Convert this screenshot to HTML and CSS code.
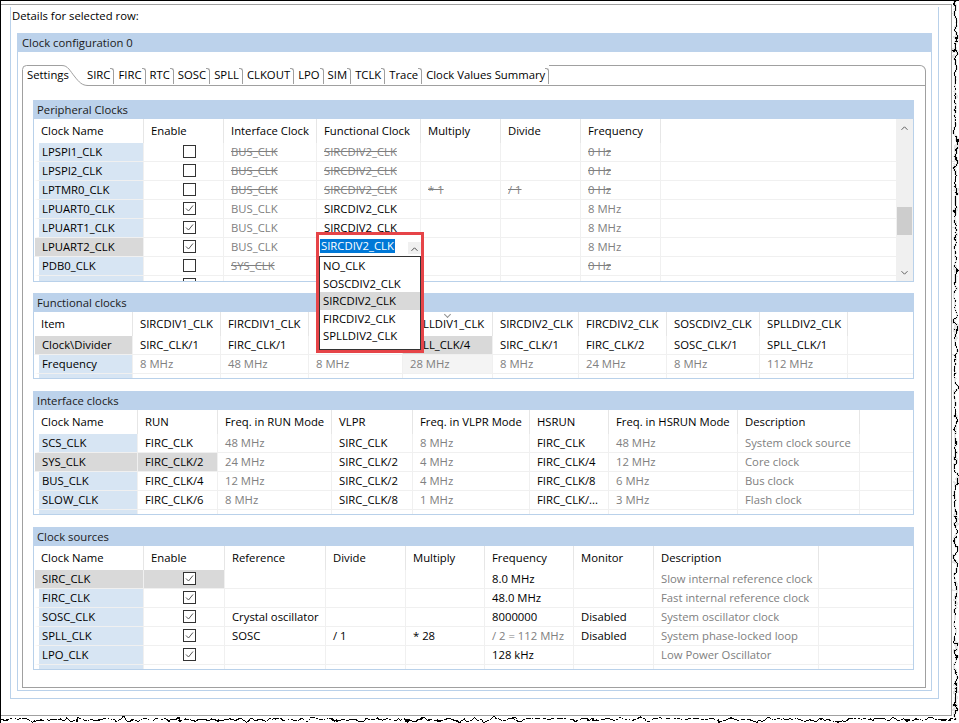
FILE: index.html
```html
<!DOCTYPE html>
<html>
<head>
<meta charset="utf-8">
<title>Details for selected row</title>
<link rel="stylesheet" href="styles.css">
</head>
<body>
<div class="shot">
  <div class="outer">
    <div class="details">
      <div class="label">Details for selected row:</div>
      <div class="cfg">
        <div class="cfg-head">Clock configuration 0</div>
        <div class="cfg-body">
          <div class="tabstrip">
            <div class="tab-sel">
              <svg class="tabshape" width="66" height="21" viewBox="0 0 66 21"><path d="M0.5 21 V4.5 Q0.5 0.5 4.5 0.5 H40 C46 0.5 48 6 53 12 C57 17 60 20.5 66 20.5" fill="#fff" stroke="#a0a0a0"/></svg>
              <span class="tab-sel-text">Settings</span>
            </div>
            <div class="tab first">SIRC</div>
            <div class="tab">FIRC</div>
            <div class="tab">RTC</div>
            <div class="tab">SOSC</div>
            <div class="tab">SPLL</div>
            <div class="tab">CLKOUT</div>
            <div class="tab">LPO</div>
            <div class="tab">SIM</div>
            <div class="tab">TCLK</div>
            <div class="tab">Trace</div>
            <div class="tab">Clock Values Summary</div>
            <div class="tabfill"></div>
          </div>
          <div class="tabbody">

            <div class="sec sec-per">
              <div class="sec-head">Peripheral Clocks</div>
              <div class="sec-body h-per">
                <table class="grid per">
                  <colgroup><col class="w110"><col class="w80"><col class="w93"><col class="w104"><col class="w80"><col class="w80"><col class="w80"><col class="w235"></colgroup>
                  <tr><th>Clock Name</th><th>Enable</th><th>Interface Clock</th><th>Functional Clock</th><th>Multiply</th><th>Divide</th><th>Frequency</th><th></th></tr>
                  <tr><td class="n">LPSPI1_CLK</td><td class="ck"><svg class="cb" width="13" height="13" viewBox="0 0 13 13"><rect x="0.5" y="0.5" width="12" height="12" fill="#fff" stroke="#333"/></svg></td><td class="s">BUS_CLK</td><td class="s">SIRCDIV2_CLK</td><td></td><td></td><td class="s">0 Hz</td><td></td></tr>
                  <tr><td class="n">LPSPI2_CLK</td><td class="ck"><svg class="cb" width="13" height="13" viewBox="0 0 13 13"><rect x="0.5" y="0.5" width="12" height="12" fill="#fff" stroke="#333"/></svg></td><td class="s">BUS_CLK</td><td class="s">SIRCDIV2_CLK</td><td></td><td></td><td class="s">0 Hz</td><td></td></tr>
                  <tr><td class="n">LPTMR0_CLK</td><td class="ck"><svg class="cb" width="13" height="13" viewBox="0 0 13 13"><rect x="0.5" y="0.5" width="12" height="12" fill="#fff" stroke="#333"/></svg></td><td class="s">BUS_CLK</td><td class="s">SIRCDIV2_CLK</td><td class="s">* 1</td><td class="s">/ 1</td><td class="s">0 Hz</td><td></td></tr>
                  <tr><td class="n">LPUART0_CLK</td><td class="ck"><svg class="cb" width="13" height="13" viewBox="0 0 13 13"><rect x="0.5" y="0.5" width="12" height="12" fill="#fff" stroke="#333"/><path d="M3 6.5 L5.5 9 L10 3.5" fill="none" stroke="#555"/></svg></td><td class="g">BUS_CLK</td><td>SIRCDIV2_CLK</td><td></td><td></td><td class="g">8 MHz</td><td></td></tr>
                  <tr><td class="n">LPUART1_CLK</td><td class="ck"><svg class="cb" width="13" height="13" viewBox="0 0 13 13"><rect x="0.5" y="0.5" width="12" height="12" fill="#fff" stroke="#333"/><path d="M3 6.5 L5.5 9 L10 3.5" fill="none" stroke="#555"/></svg></td><td class="g">BUS_CLK</td><td>SIRCDIV2_CLK</td><td></td><td></td><td class="g">8 MHz</td><td></td></tr>
                  <tr><td class="sel">LPUART2_CLK</td><td class="ck"><svg class="cb" width="13" height="13" viewBox="0 0 13 13"><rect x="0.5" y="0.5" width="12" height="12" fill="#fff" stroke="#333"/><path d="M3 6.5 L5.5 9 L10 3.5" fill="none" stroke="#555"/></svg></td><td class="g">BUS_CLK</td><td>SIRCDIV2_CLK</td><td></td><td></td><td class="g">8 MHz</td><td></td></tr>
                  <tr><td class="n">PDB0_CLK</td><td class="ck"><svg class="cb" width="13" height="13" viewBox="0 0 13 13"><rect x="0.5" y="0.5" width="12" height="12" fill="#fff" stroke="#333"/></svg></td><td class="s">SYS_CLK</td><td class="s">SIRCDIV2_CLK</td><td></td><td></td><td class="s">0 Hz</td><td></td></tr>
                  <tr><td class="n"></td><td class="ck"><svg class="cb" width="13" height="13" viewBox="0 0 13 13"><rect x="0.5" y="0.5" width="12" height="12" fill="#fff" stroke="#333"/></svg></td><td></td><td></td><td></td><td></td><td></td><td></td></tr>
                </table>
                <div class="vscroll">
                  <div class="sb-btn"><svg width="7" height="4" viewBox="0 0 7 4"><path d="M0.5 3.8 L3.5 0.8 L6.5 3.8" fill="none" stroke="#606060"/></svg></div>
                  <div class="sb-track"><div class="sb-thumb"></div></div>
                  <div class="sb-btn"><svg width="7" height="4" viewBox="0 0 7 4"><path d="M0.5 0.2 L3.5 3.2 L6.5 0.2" fill="none" stroke="#606060"/></svg></div>
                </div>
              </div>
              <div class="dd">
                <div class="dd-field">
                  <span class="dd-sel">SIRCDIV2_CLK</span>
                  <span class="dd-btn"><svg width="7" height="4" viewBox="0 0 7 4"><path d="M0.5 3.8 L3.5 0.8 L6.5 3.8" fill="none" stroke="#505050"/></svg></span>
                </div>
                <div class="dd-list">
                  <div class="dd-item">NO_CLK</div>
                  <div class="dd-item">SOSCDIV2_CLK</div>
                  <div class="dd-item hl">SIRCDIV2_CLK</div>
                  <div class="dd-item">FIRCDIV2_CLK</div>
                  <div class="dd-item">SPLLDIV2_CLK</div>
                </div>
              </div>
            </div>

            <div class="sec sec-fun">
              <div class="sec-head">Functional clocks</div>
              <div class="sec-body h-fun">
                <table class="grid fun">
                  <colgroup><col class="w99"><col class="w88"><col class="w88"><col class="w94"><col class="w90"><col class="w86"><col class="w88"><col class="w93"><col class="w88"><col></colgroup>
                  <tr><th>Item</th><th>SIRCDIV1_CLK</th><th>FIRCDIV1_CLK</th><th>SOSCDIV1_CLK</th><th class="sort">SPLLDIV1_CLK</th><th>SIRCDIV2_CLK</th><th>FIRCDIV2_CLK</th><th>SOSCDIV2_CLK</th><th>SPLLDIV2_CLK</th><th></th></tr>
                  <tr><td class="sel">Clock\Divider</td><td>SIRC_CLK/1</td><td>FIRC_CLK/1</td><td>SOSC_CLK/1</td><td class="selc">SPLL_CLK/4</td><td>SIRC_CLK/1</td><td>FIRC_CLK/2</td><td>SOSC_CLK/1</td><td>SPLL_CLK/1</td><td></td></tr>
                  <tr><td class="n">Frequency</td><td class="g">8 MHz</td><td class="g">48 MHz</td><td class="g">8 MHz</td><td class="g lt">28 MHz</td><td class="g">8 MHz</td><td class="g">24 MHz</td><td class="g">8 MHz</td><td class="g">112 MHz</td><td></td></tr>
                  <tr><td class="n"></td><td></td><td></td><td></td><td></td><td></td><td></td><td></td><td></td><td></td></tr>
                </table>
              </div>
            </div>

            <div class="sec sec-int">
              <div class="sec-head">Interface clocks</div>
              <div class="sec-body h-int">
                <table class="grid int">
                  <colgroup><col class="w104"><col class="w80"><col class="w114"><col class="w81"><col class="w117"><col class="w79"><col class="w129"><col class="w122"><col></colgroup>
                  <tr><th>Clock Name</th><th>RUN</th><th>Freq. in RUN Mode</th><th>VLPR</th><th>Freq. in VLPR Mode</th><th>HSRUN</th><th>Freq. in HSRUN Mode</th><th>Description</th><th></th></tr>
                  <tr><td class="n">SCS_CLK</td><td>FIRC_CLK</td><td class="g">48 MHz</td><td>SIRC_CLK</td><td class="g">8 MHz</td><td>FIRC_CLK</td><td class="g">48 MHz</td><td class="g">System clock source</td><td></td></tr>
                  <tr><td class="sel">SYS_CLK</td><td class="selc">FIRC_CLK/2</td><td class="g">24 MHz</td><td>SIRC_CLK/2</td><td class="g">4 MHz</td><td>FIRC_CLK/4</td><td class="g">12 MHz</td><td class="g">Core clock</td><td></td></tr>
                  <tr><td class="n">BUS_CLK</td><td>FIRC_CLK/4</td><td class="g">12 MHz</td><td>SIRC_CLK/2</td><td class="g">4 MHz</td><td>FIRC_CLK/8</td><td class="g">6 MHz</td><td class="g">Bus clock</td><td></td></tr>
                  <tr><td class="n">SLOW_CLK</td><td>FIRC_CLK/6</td><td class="g">8 MHz</td><td>SIRC_CLK/8</td><td class="g">1 MHz</td><td>FIRC_CLK/...</td><td class="g">3 MHz</td><td class="g">Flash clock</td><td></td></tr>
                  <tr><td class="n"></td><td></td><td></td><td></td><td></td><td></td><td></td><td></td><td></td></tr>
                </table>
              </div>
            </div>

            <div class="sec sec-src">
              <div class="sec-head">Clock sources</div>
              <div class="sec-body h-src">
                <table class="grid src">
                  <colgroup><col class="w110"><col class="w81"><col class="w101"><col class="w80"><col class="w79"><col class="w89"><col class="w80"><col class="w165"><col></colgroup>
                  <tr><th>Clock Name</th><th>Enable</th><th>Reference</th><th>Divide</th><th>Multiply</th><th>Frequency</th><th>Monitor</th><th>Description</th><th></th></tr>
                  <tr><td class="sel">SIRC_CLK</td><td class="ck selc"><svg class="cb" width="13" height="13" viewBox="0 0 13 13"><rect x="0.5" y="0.5" width="12" height="12" fill="#fff" stroke="#333"/><path d="M3 6.5 L5.5 9 L10 3.5" fill="none" stroke="#555"/></svg></td><td></td><td></td><td></td><td>8.0 MHz</td><td></td><td class="g">Slow internal reference clock</td><td></td></tr>
                  <tr><td class="n">FIRC_CLK</td><td class="ck"><svg class="cb" width="13" height="13" viewBox="0 0 13 13"><rect x="0.5" y="0.5" width="12" height="12" fill="#fff" stroke="#333"/><path d="M3 6.5 L5.5 9 L10 3.5" fill="none" stroke="#555"/></svg></td><td></td><td></td><td></td><td>48.0 MHz</td><td></td><td class="g">Fast internal reference clock</td><td></td></tr>
                  <tr><td class="n">SOSC_CLK</td><td class="ck"><svg class="cb" width="13" height="13" viewBox="0 0 13 13"><rect x="0.5" y="0.5" width="12" height="12" fill="#fff" stroke="#333"/><path d="M3 6.5 L5.5 9 L10 3.5" fill="none" stroke="#555"/></svg></td><td>Crystal oscillator</td><td></td><td></td><td>8000000</td><td>Disabled</td><td class="g">System oscillator clock</td><td></td></tr>
                  <tr><td class="n">SPLL_CLK</td><td class="ck"><svg class="cb" width="13" height="13" viewBox="0 0 13 13"><rect x="0.5" y="0.5" width="12" height="12" fill="#fff" stroke="#333"/><path d="M3 6.5 L5.5 9 L10 3.5" fill="none" stroke="#555"/></svg></td><td>SOSC</td><td>/ 1</td><td>* 28</td><td class="g">/ 2 = 112 MHz</td><td>Disabled</td><td class="g">System phase-locked loop</td><td></td></tr>
                  <tr><td class="n">LPO_CLK</td><td class="ck"><svg class="cb" width="13" height="13" viewBox="0 0 13 13"><rect x="0.5" y="0.5" width="12" height="12" fill="#fff" stroke="#333"/><path d="M3 6.5 L5.5 9 L10 3.5" fill="none" stroke="#555"/></svg></td><td></td><td></td><td></td><td>128 kHz</td><td></td><td class="g">Low Power Oscillator</td><td></td></tr>
                  <tr><td class="n"></td><td></td><td></td><td></td><td></td><td></td><td></td><td></td><td></td></tr>
                </table>
              </div>
            </div>

          </div>
        </div>
      </div>
    </div>
  </div>
  <svg class="torn" width="959" height="723" viewBox="0 0 959 723">
    <defs>
      <filter id="rough" filterUnits="userSpaceOnUse" x="0" y="0" width="959" height="723">
        <feTurbulence type="fractalNoise" baseFrequency="0.11" numOctaves="3" seed="7" result="noise"/>
        <feDisplacementMap in="SourceGraphic" in2="noise" scale="9" xChannelSelector="R" yChannelSelector="G"/>
      </filter>
    </defs>
    <path d="M955.5 -30 V719.5 H-30 V780 H1000 V-30 Z" fill="#fff" stroke="#000" stroke-width="1.2" filter="url(#rough)"/>
  </svg>
</div>
</body>
</html>
```

FILE: styles.css
```css
* { box-sizing: border-box; }

body {
  margin: 0;
  background: #fff;
  font-family: "Open Sans", "Noto Sans", "DejaVu Sans", sans-serif;
  font-size: 11.3px;
  color: #000;
}

.shot {
  width: 959px;
  height: 723px;
  position: relative;
  overflow: hidden;
  background: #fff;
  border-top: 1px solid #000;
  border-left: 1px solid #000;
}

.outer {
  margin-top: 3px;
  width: 951px;
  height: 712px;
  border-top: 1px solid #a0a0a0;
  border-right: 1px solid #a0a0a0;
  border-bottom: 1px solid #a0a0a0;
}

.details {
  margin: 2px 0 0 9px;
  width: 929px;
  height: 692px;
  border: 1px solid #b9d1ea;
  border-top: 0;
}

.label {
  height: 18px;
  line-height: 18px;
  padding-left: 1px;
}

.cfg {
  margin: 8px 6px 0 6px;
}

.cfg-head {
  height: 19px;
  line-height: 19px;
  padding-left: 5px;
  background: #bcd2eb;
  color: #1a1a1a;
}

.cfg-body {
  border: 1px solid #b9d1ea;
  border-top: 0;
  padding: 13px 5px 2px 4px;
}

/* tabs */
.tabstrip {
  display: flex;
  height: 21px;
}

.tab-sel {
  position: relative;
  width: 65px;
  height: 21px;
  flex: none;
}

.tabshape {
  position: absolute;
  left: 0;
  top: 0;
  overflow: visible;
}

.tab-sel-text {
  position: relative;
  display: block;
  padding-left: 5px;
  line-height: 20px;
}

.tab {
  position: relative;
  flex: none;
  padding: 0 4px 0 4px;
  line-height: 20px;
  border-bottom: 1px solid #a0a0a0;
  white-space: nowrap;
}

.tab.first { padding-left: 0; }

.tab::after {
  content: "";
  position: absolute;
  right: 0;
  top: 3px;
  width: 3px;
  height: 15px;
  border-top: 1px solid #a0a0a0;
  border-right: 1px solid #a0a0a0;
  border-top-right-radius: 3px;
}

.tabfill {
  flex: 1;
  border-top: 1px solid #a0a0a0;
  border-right: 1px solid #a0a0a0;
  border-bottom: 1px solid #a0a0a0;
  border-top-right-radius: 6px;
}

.tabbody {
  border: 1px solid #a0a0a0;
  border-top: 0;
  padding: 14px 11px 17px 10px;
}

/* sections */
.sec {
  position: relative;
  margin-bottom: 12px;
}
.sec-per { margin-bottom: 11px; }
.sec-src { margin-bottom: 0; }

.sec-head {
  height: 19px;
  line-height: 19px;
  padding-left: 4px;
  background: #bcd2eb;
  color: #1a1a1a;
}

.sec-body {
  border: 1px solid #b9d1ea;
  border-top: 0;
  overflow: hidden;
}

.h-per { height: 163px; display: flex; align-items: flex-start; }
.h-fun { height: 67px; }
.h-int { height: 105px; }
.h-src { height: 124px; }

/* grid tables */
.grid {
  table-layout: fixed;
  border-collapse: separate;
  border-spacing: 0;
  width: 100%;
}
.grid.per { width: 862px; flex: none; }

.grid th {
  font-weight: normal;
  text-align: left;
  line-height: 24px;
  padding: 0 0 0 7px;
  border-right: 1px solid #e6e6e6;
  white-space: nowrap;
  overflow: hidden;
}

.grid td {
  height: 19px;
  line-height: 18px;
  padding: 0 0 0 7px;
  border-right: 1px solid #f0f0f0;
  border-bottom: 1px solid #f0f0f0;
  white-space: nowrap;
  overflow: hidden;
}

.grid th:last-child,
.grid td:last-child { border-right: 0; }

.grid td.n {
  background: #d7e5f3;
  border-left: 5px solid #fff;
  padding-left: 3px;
}

.grid td.sel {
  background: #d9d9d9;
  border-left: 1px solid #fff;
  padding-left: 7px;
}

.grid td.selc { background: #d9d9d9; }
.grid td.lt { background: #f4f4f4; }

.grid td.ck { padding-left: 39px; }
.cb { display: inline-block; vertical-align: -2px; }

.g { color: #808080; }
.s { color: #808080; text-decoration: line-through; }

th.sort { position: relative; }
th.sort::before {
  content: "";
  position: absolute;
  left: 42px;
  top: 0;
  width: 4px;
  height: 4px;
  border-right: 1px solid #909090;
  border-bottom: 1px solid #909090;
  transform: rotate(45deg);
}

/* column widths */
.w79 { width: 79px; }
.w80 { width: 80px; }
.w81 { width: 81px; }
.w86 { width: 86px; }
.w88 { width: 88px; }
.w89 { width: 89px; }
.w90 { width: 90px; }
.w93 { width: 93px; }
.w94 { width: 94px; }
.w99 { width: 99px; }
.w101 { width: 101px; }
.w104 { width: 104px; }
.w110 { width: 110px; }
.w114 { width: 114px; }
.w117 { width: 117px; }
.w122 { width: 122px; }
.w129 { width: 129px; }
.w165 { width: 165px; }
.w235 { width: 235px; }

/* scrollbar */
.vscroll {
  width: 17px;
  height: 162px;
  flex: none;
  background: #f0f0f0;
  display: flex;
  flex-direction: column;
}
.sb-btn {
  height: 17px;
  display: flex;
  align-items: center;
  justify-content: center;
}
.sb-track {
  flex: 1;
  padding: 71px 1px 0 1px;
}
.sb-thumb {
  height: 28px;
  background: #cdcdcd;
}

/* dropdown */
.dd {
  position: absolute;
  left: 283px;
  top: 132px;
  width: 108px;
  border: 3px solid #e64448;
  background: #fff;
  z-index: 10;
}
.dd-field {
  height: 21px;
  display: flex;
  align-items: center;
  padding-left: 1px;
}
.dd-sel {
  background: #0078d7;
  color: #fff;
  line-height: 14px;
  padding: 0 1px;
}
.dd-btn {
  margin-left: auto;
  margin-top: 4px;
  width: 13px;
  height: 12px;
  background: #f0f0f0;
  display: flex;
  align-items: flex-end;
  justify-content: center;
  padding-bottom: 3px;
}
.dd-list {
  border: 1px solid #333;
  padding-bottom: 4px;
}
.dd-item {
  height: 17.5px;
  line-height: 17.5px;
  padding-left: 3px;
  white-space: nowrap;
}
.dd-item.hl { background: #d9d9d9; }

.torn {
  position: absolute;
  left: -1px;
  top: -1px;
  pointer-events: none;
  z-index: 20;
}
```
